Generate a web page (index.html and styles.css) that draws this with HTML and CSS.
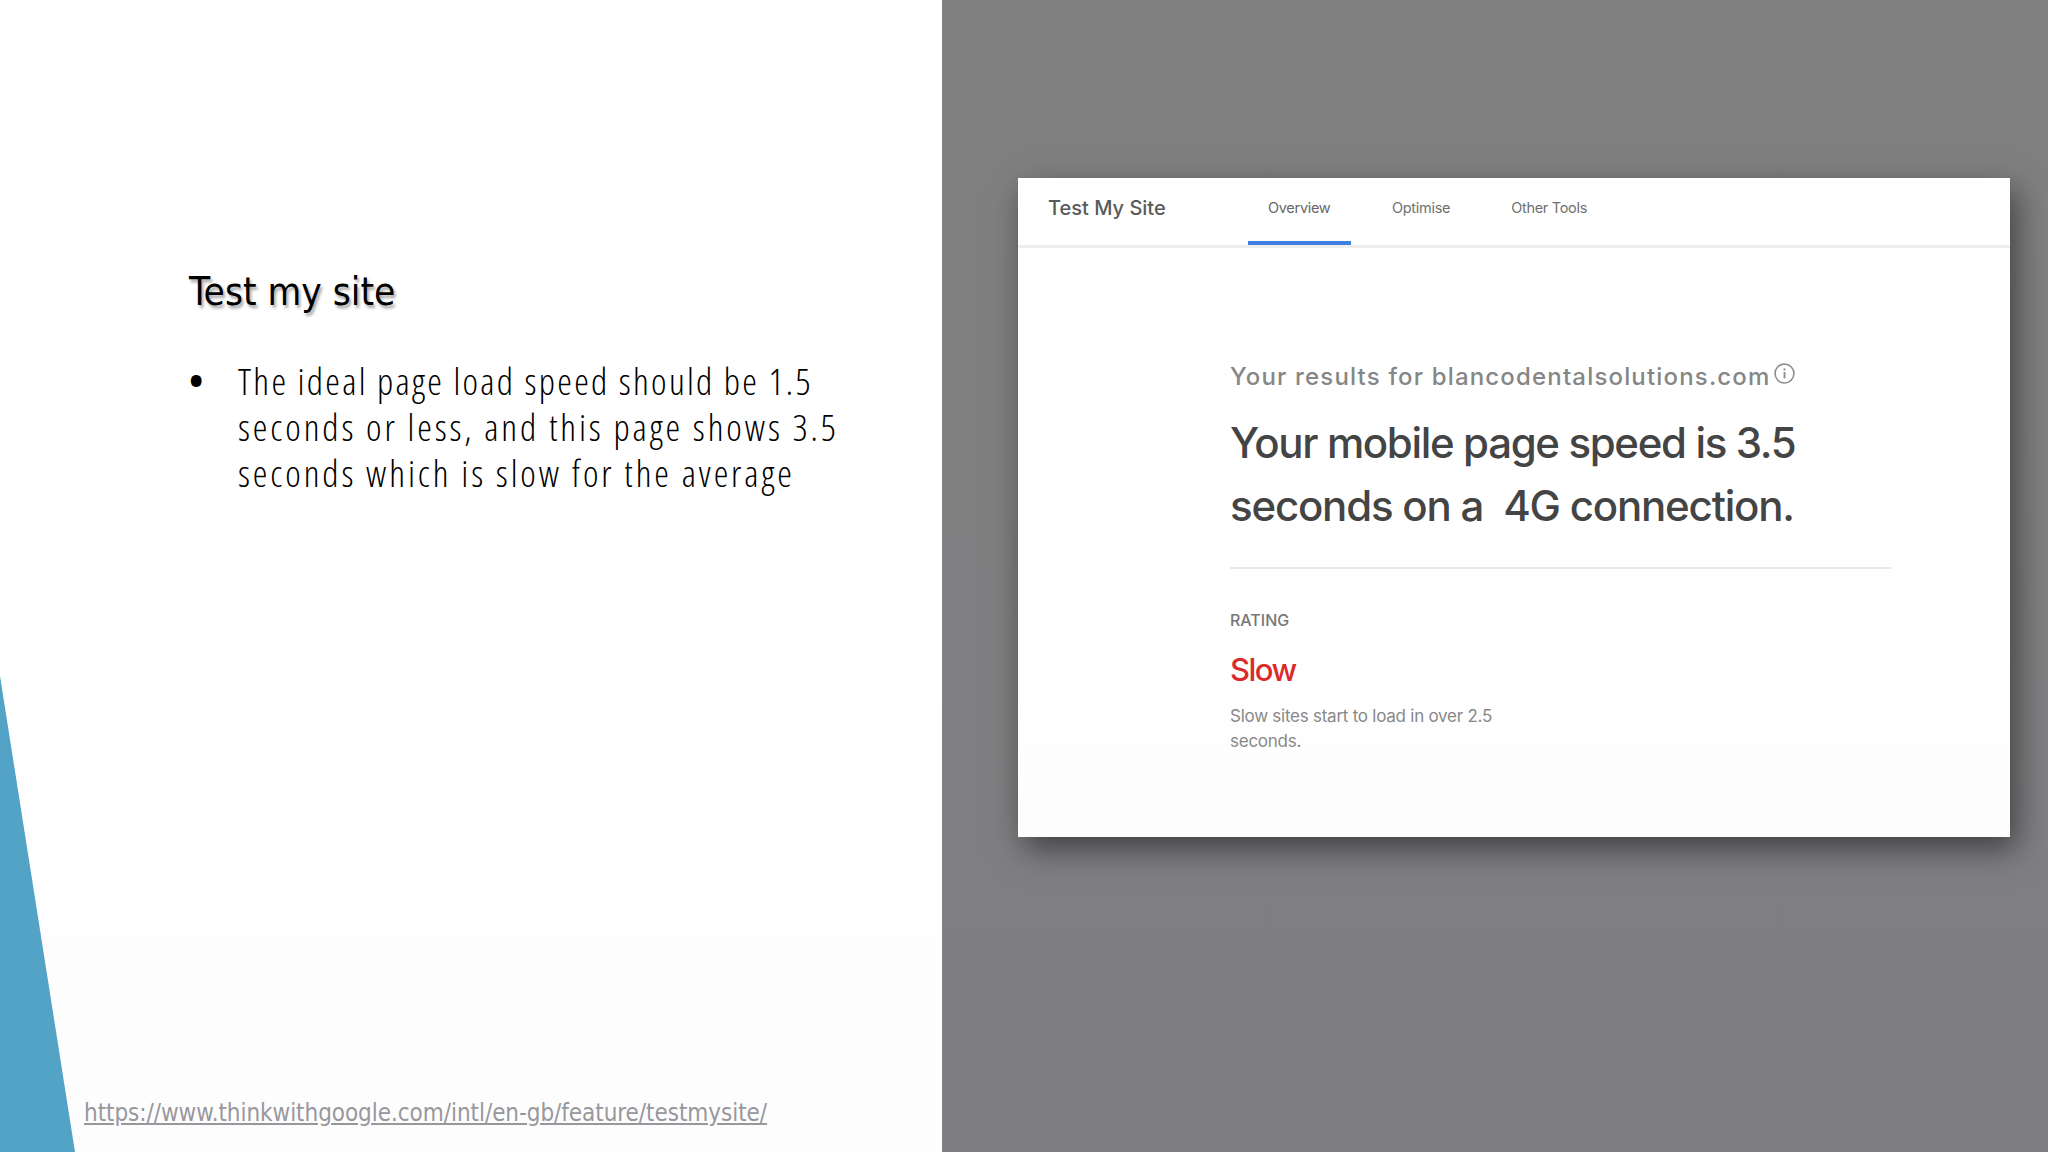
FILE: index.html
```html
<!DOCTYPE html>
<html lang="en">
<head>
<meta charset="utf-8">
<title>Test my site</title>
<link rel="stylesheet" href="styles.css">
</head>
<body>
<div class="slide">
  <section class="notes">
    <svg class="wedge" viewBox="0 0 75 476" aria-hidden="true"><polygon points="0,0 75,476 0,476"/></svg>
    <h2 class="notes-title">Test my site</h2>
    <ul class="notes-list">
      <li><span class="notes-text">The ideal page load speed should be 1.5 seconds or less, and this page shows 3.5 seconds which is slow for the average</span></li>
    </ul>
    <a class="source-link" href="#">https://www.thinkwithgoogle.com/intl/en-gb/feature/testmysite/</a>
  </section>
  <section class="stage">
    <article class="card">
      <header class="card-nav">
        <div class="brand">Test My Site</div>
        <nav class="tabs">
          <a class="tab tab-active" href="#">Overview</a>
          <a class="tab" href="#">Optimise</a>
          <a class="tab" href="#">Other Tools</a>
        </nav>
      </header>
      <div class="results">
        <p class="results-for">Your results for blancodentalsolutions.com<svg class="info" viewBox="0 0 20 20" aria-hidden="true"><circle cx="10" cy="10" r="9" fill="none" stroke="currentColor" stroke-width="1.5"/><rect x="9.1" y="8.6" width="1.8" height="6" fill="currentColor"/><rect x="9.1" y="5.2" width="1.8" height="1.9" fill="currentColor"/></svg></p>
        <h1 class="headline">Your mobile page speed is 3.5<br>seconds on a&nbsp; 4G connection.</h1>
        <h3 class="rating-label">RATING</h3>
        <div class="rating-value">Slow</div>
        <p class="rating-note">Slow sites start to load in over 2.5<br>seconds.</p>
      </div>
    </article>
  </section>
</div>
</body>
</html>
```
FILE: styles.css
```css
* { box-sizing: border-box; }
html, body { margin: 0; height: 100%; }
body { background: #fff; overflow: hidden; }

.slide { display: flex; width: 2048px; height: 1152px; }

.notes {
  position: relative;
  display: flex;
  flex-direction: column;
  width: 942px;
  padding: 266px 0 24px 189px;
  background: linear-gradient(#fff 60%, #fdfdfe);
}
.wedge { position: absolute; left: 0; bottom: 0; width: 75px; height: 476px; fill: #53a3c7; }
.notes-title {
  margin: 0;
  font: 400 38.5px/52px "DejaVu Sans Condensed", "DejaVu Sans", sans-serif;
  color: #000;
  text-shadow: 2px 3px 3px rgba(0,0,0,.35);
}
.notes-list {
  margin: 40px 0 0;
  padding: 0;
  width: 670px;
  list-style: none;
  font: 300 37px/46px "Open Sans", sans-serif;
  font-stretch: 75%;
  color: #000;
}
.notes-list li { display: flex; }
.notes-list li::before { content: "\2022"; flex: 0 0 49px; font-weight: 700; }
.notes-text { display: block; letter-spacing: 2.9px; }
.notes-text::first-line { letter-spacing: 2.3px; }
.source-link {
  margin: auto 0 0 -105px;
  font: 400 24px/30px "DejaVu Sans Condensed", "DejaVu Sans", sans-serif;
  letter-spacing: -.05px;
  color: #98979c;
  text-decoration: underline;
  align-self: flex-start;
}

.stage {
  flex: 1;
  padding: 178px 38px 0 76px;
  background: linear-gradient(#808080, #7f7e82);
}
.card {
  height: 659px;
  background: linear-gradient(#fff 70%, #fdfdfe);
  box-shadow: 6px 12px 30px rgba(0,0,0,.5);
}
.card-nav {
  display: flex;
  align-items: stretch;
  height: 70px;
  padding-left: 30px;
  border-bottom: 3px solid #eee;
  font-family: Inter, Roboto, sans-serif;
}
.brand { width: 200px; font-size: 20px; font-weight: 500; line-height: 60px; color: #5a5a5a; }
.tabs { display: flex; gap: 21px; }
.tab {
  padding: 0 20px;
  height: 67px;
  font-size: 14.5px;
  letter-spacing: -.3px;
  line-height: 60px;
  color: #707070;
  text-decoration: none;
}
.tab-active { flex: 0 0 103px; border-bottom: 4px solid #3f7fe0; color: #666; }

.results {
  padding: 113px 0 0 212px;
  width: 873px;
  font-family: Inter, Roboto, sans-serif;
}
.results-for {
  display: flex;
  align-items: flex-start;
  margin: 0;
  font-size: 24px;
  line-height: 32px;
  font-weight: 500;
  letter-spacing: 1.17px;
  color: #868686;
}
.info { width: 21px; height: 21px; margin: 2px 0 0 3px; color: #8c8c8c; }
.headline {
  margin: 18px 0 0;
  padding-bottom: 30px;
  border-bottom: 2px solid #e8e8e8;
  font-size: 42px;
  line-height: 63px;
  font-weight: 500;
  letter-spacing: -1.2px;
  color: #444;
}
.headline::first-line { letter-spacing: -1.35px; }
.rating-label { margin: 39px 0 0; font-size: 16px; line-height: 24px; font-weight: 500; color: #777; }
.rating-value { margin-top: 18px; font-size: 31px; line-height: 40px; font-weight: 500; letter-spacing: -1.5px; color: #d92b2b; }
.rating-note { margin: 14px 0 0; font-size: 17px; line-height: 25px; letter-spacing: -.25px; color: #888; }
```
